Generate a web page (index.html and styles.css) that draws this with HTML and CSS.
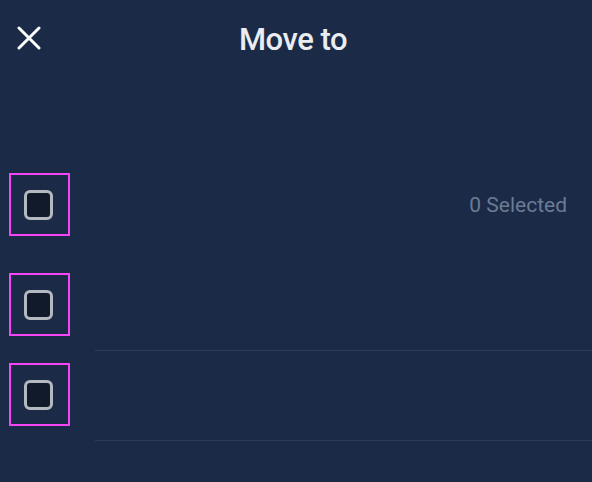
FILE: index.html
```html
<!DOCTYPE html>
<html lang="en">
<head>
    <meta charset="UTF-8">
    <meta name="viewport" content="width=device-width, initial-scale=1.0">
    <title>Move to</title>
    <link rel="stylesheet" href="styles.css">
</head>
<body>
    <header class="top-bar">
        <button class="close-btn" aria-label="Close">
            <svg width="24" height="24" viewBox="0 0 24 24">
                <path d="M2 2 L22 22 M22 2 L2 22" stroke="#ffffff" stroke-width="3" stroke-linecap="round" fill="none"/>
            </svg>
        </button>
        <h1>Move to</h1>
    </header>

    <div class="folder-list">
        <!-- Select all row -->
        <div class="row row-head">
            <div class="pick"><span class="check"></span></div>
            <div class="row-body">
                <span class="count">0 Selected</span>
            </div>
        </div>

        <div class="row">
            <div class="pick"><span class="check"></span></div>
            <div class="row-body line"></div>
        </div>

        <div class="row">
            <div class="pick"><span class="check"></span></div>
            <div class="row-body line"></div>
        </div>
    </div>
</body>
</html>
```

FILE: styles.css
```css
/* Global */
body {
    margin: 0;
    background: #1b2a47;
    font-family: 'Roboto', 'Liberation Sans', sans-serif;
    color: #e9ecf1;
    height: 482px;
    overflow: hidden;
}

/* Header */
.top-bar {
    position: relative;
    height: 78px;
    display: flex;
    align-items: center;
    justify-content: center;
}

.top-bar h1 {
    margin: 0 6px 0 0;
    font-size: 31px;
    font-weight: 500;
    color: #e9ecf1;
    letter-spacing: -0.5px;
}

.close-btn {
    position: absolute;
    left: 17px;
    top: 26px;
    padding: 0;
    border: none;
    background: none;
    width: 24px;
    height: 24px;
    cursor: pointer;
}

/* List */
.folder-list {
    margin-top: 83px;
    display: flex;
    flex-direction: column;
}

.row {
    display: flex;
    height: 90px;
}

.row-head {
    margin-bottom: 10px;
}

.pick {
    box-sizing: border-box;
    width: 61px;
    height: 63px;
    margin: 12px 0 0 9px;
    padding-right: 3px;
    border: 2px solid #f545f5;
    display: flex;
    align-items: center;
    justify-content: center;
}

.check {
    box-sizing: border-box;
    width: 29px;
    height: 30px;
    border: 3px solid #b3b8c1;
    border-radius: 6px;
    background: #111a2b;
}

.row-body {
    flex: 1;
    margin-left: 25px;
    display: flex;
    align-items: center;
    justify-content: flex-end;
    padding-right: 25px;
}

.row-head .row-body {
    padding-bottom: 2px;
}

.line {
    border-bottom: 1px solid #2d3c58;
}

.count {
    font-size: 21px;
    color: #6c7b94;
}
```
